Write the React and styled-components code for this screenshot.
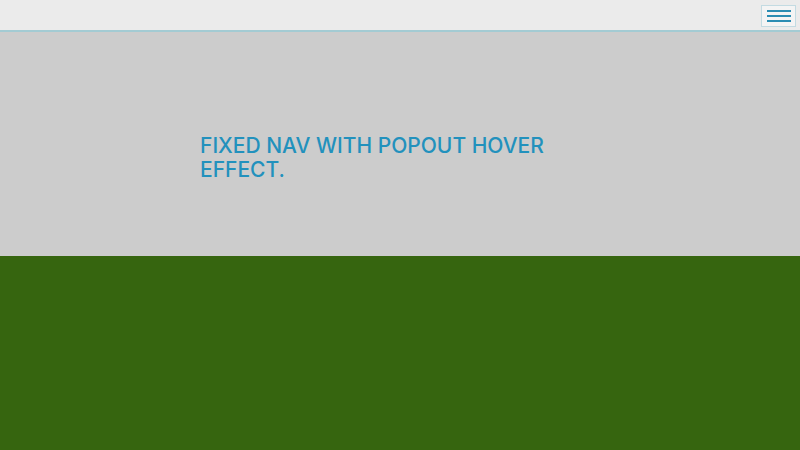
import React from 'react';
import styled, { createGlobalStyle } from 'styled-components';

const GlobalStyle = createGlobalStyle`
  html, body {
    margin: 0;
    padding: 0;
  }
  body {
    font-family: Inter, "Open Sans", sans-serif;
    background: #36650f;
  }
`;

const Page = styled.div`
  width: 100%;
  min-height: 450px;
  display: flex;
  flex-direction: column;
`;

const Nav = styled.nav`
  height: 30px;
  background: #ebebeb;
  border-bottom: 2px solid #a3cbd3;
  display: flex;
  justify-content: flex-end;
  align-items: center;
  padding: 0 4px;
`;

const MenuButton = styled.button`
  width: 35px;
  height: 22px;
  padding: 0;
  margin-top: 1px;
  border: 1px solid #c3dbe2;
  background: #f4f4f4;
  display: flex;
  flex-direction: column;
  justify-content: center;
  align-items: center;
  gap: 3px;
  cursor: pointer;
`;

const Bar = styled.span`
  display: block;
  width: 24px;
  height: 2px;
  background: #2b8db3;
`;

const Hero = styled.header`
  height: 224px;
  box-sizing: border-box;
  padding-top: 102px;
  background: #cccccc;
  display: flex;
  justify-content: center;
`;

const Title = styled.h1`
  width: 400px;
  margin: 0;
  font-size: 21px;
  line-height: 24px;
  font-weight: 500;
  letter-spacing: 0;
  color: #2291bd;
  text-transform: uppercase;
`;

const Content = styled.main`
  flex: 1;
  background: #36650f;
`;

export default function App() {
  return (
    <Page>
      <GlobalStyle />
      <Nav>
        <MenuButton aria-label="Menu">
          <Bar />
          <Bar />
          <Bar />
        </MenuButton>
      </Nav>
      <Hero>
        <Title>Fixed nav with popout hover effect.</Title>
      </Hero>
      <Content />
    </Page>
  );
}
